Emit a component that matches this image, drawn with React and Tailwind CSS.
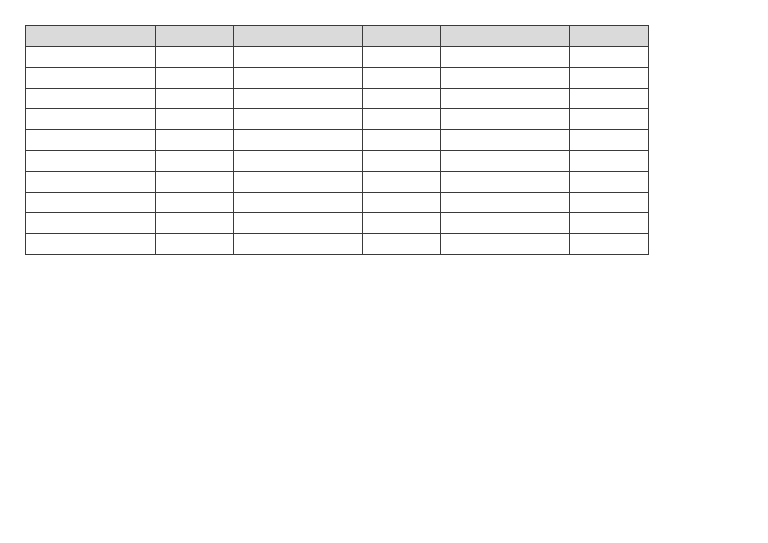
export default function App() {
  const widths = ["w-[130px]", "w-[78px]", "w-[129px]", "w-[78px]", "w-[129px]", "w-[79px]"];
  const rows = Array.from({ length: 10 });
  return (
    <div className="min-h-[543px] bg-white pt-[25px] pl-[25px]" style={{ fontFamily: '"Liberation Sans", Arial, sans-serif' }}>
      <table className="table-fixed border-collapse w-[623px] border border-[#3a3a3a]">
        <colgroup>
          {widths.map((w, i) => (
            <col key={i} className={w} />
          ))}
        </colgroup>
        <thead>
          <tr className="h-[21px] bg-[#dadada]">
            {widths.map((_, i) => (
              <th key={i} className="border border-[#3a3a3a] p-0"></th>
            ))}
          </tr>
        </thead>
        <tbody>
          {rows.map((_, r) => (
            <tr key={r} className="h-[20.8px]">
              {widths.map((_, i) => (
                <td key={i} className="border border-[#3a3a3a] p-0"></td>
              ))}
            </tr>
          ))}
        </tbody>
      </table>
    </div>
  );
}
